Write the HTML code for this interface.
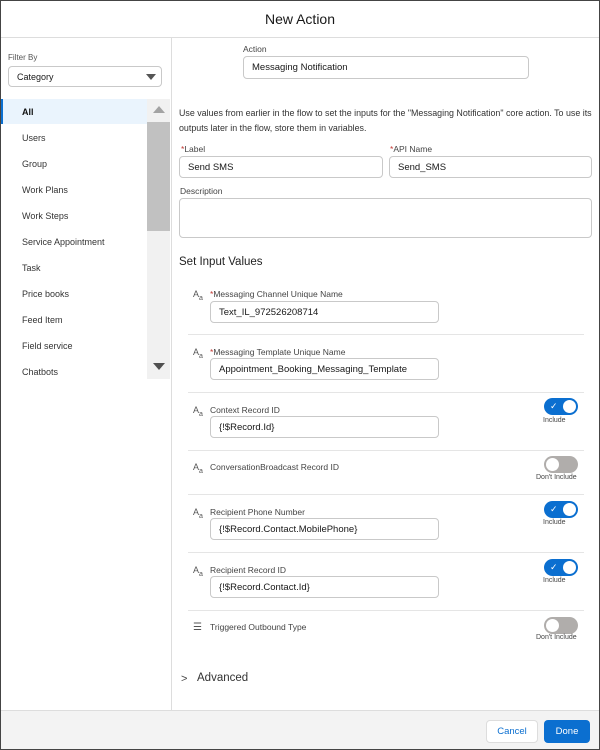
<!DOCTYPE html>
<html><head><style>
*{box-sizing:border-box;margin:0;padding:0}
body{width:600px;height:750px;font-family:"Liberation Sans",sans-serif;color:#181818;background:#fff;position:relative;overflow:hidden}
.a{position:absolute}
.frame{left:0;top:0;width:600px;height:750px;border:1px solid #444}
.inp{position:absolute;border:1px solid #c9c9c9;border-radius:4px;background:#fff;font-size:9.5px;padding-left:8px;display:flex;align-items:center;color:#181818}
.lbl{position:absolute;font-size:8.5px;color:#444}
.req{color:#c23934}
.sep{position:absolute;left:188px;width:396px;height:1px;background:#e5e5e5}
.ic{position:absolute;font-size:9px;color:#555}
.ic sub{font-size:7px}
.tg{position:absolute;left:544px;width:34px;height:17px;border-radius:9px}
.tg.on{background:#0b6fd0}
.tg.off{background:#b0adab}
.tg .k{position:absolute;top:2px;width:13px;height:13px;border-radius:50%;background:#fff}
.tg.on .k{right:2px}.tg.off .k{left:2px}
.tg .c{position:absolute;left:6px;top:3px;color:#fff;font-size:9px;line-height:11px}
.tl{position:absolute;font-size:7px;color:#444}
.li{position:absolute;left:22px;font-size:9px;color:#333}
</style></head><body>
<div class="a" style="left:0;top:0;width:600px;height:38px;border-bottom:1px solid #ddd"></div>
<div class="a" style="left:0;top:11px;width:600px;text-align:center;font-size:14px">New Action</div>
<div class="a" style="left:171px;top:38px;width:1px;height:672px;background:#ddd"></div>
<div class="a" style="left:8px;top:53px;font-size:8px;color:#555">Filter By</div>
<div class="inp" style="left:8px;top:66px;width:154px;height:21px;font-size:9px">Category</div>
<div class="a" style="left:146px;top:74px;border-left:5px solid transparent;border-right:5px solid transparent;border-top:6px solid #555"></div>
<div class="a" style="left:1px;top:99px;width:146px;height:25px;background:#eaf4fd;border-left:2px solid #0b6fd0"></div>
<div class="a" style="left:147px;top:99px;width:23px;height:280px;background:#f1f1f1"></div>
<div class="a" style="left:147px;top:122px;width:23px;height:109px;background:#c1c1c1"></div>
<div class="a" style="left:153px;top:106px;border-left:6px solid transparent;border-right:6px solid transparent;border-bottom:7px solid #a3a3a3"></div>
<div class="a" style="left:153px;top:363px;border-left:6px solid transparent;border-right:6px solid transparent;border-top:7px solid #505050"></div>
<div class="li" style="top:107px;font-weight:bold;color:#111">All</div>
<div class="li" style="top:133px">Users</div>
<div class="li" style="top:159px">Group</div>
<div class="li" style="top:185px">Work Plans</div>
<div class="li" style="top:211px">Work Steps</div>
<div class="li" style="top:237px">Service Appointment</div>
<div class="li" style="top:263px">Task</div>
<div class="li" style="top:289px">Price books</div>
<div class="li" style="top:315px">Feed Item</div>
<div class="li" style="top:341px">Field service</div>
<div class="li" style="top:367px">Chatbots</div>

<div class="lbl" style="left:243px;top:44px">Action</div>
<div class="inp" style="left:243px;top:56px;width:286px;height:23px">Messaging Notification</div>
<div class="a" style="left:179px;top:106px;width:414px;font-size:8.9px;line-height:15px;color:#333">Use values from earlier in the flow to set the inputs for the "Messaging Notification" core action. To use its outputs later in the flow, store them in variables.</div>
<div class="lbl" style="left:181px;top:144px"><span class="req">*</span>Label</div>
<div class="inp" style="left:179px;top:156px;width:204px;height:22px">Send SMS</div>
<div class="lbl" style="left:390px;top:144px"><span class="req">*</span>API Name</div>
<div class="inp" style="left:389px;top:156px;width:203px;height:22px">Send_SMS</div>
<div class="lbl" style="left:180px;top:186px">Description</div>
<div class="inp" style="left:179px;top:198px;width:413px;height:40px"></div>
<div class="a" style="left:179px;top:256px;font-size:11.5px;color:#222">Set Input Values</div>

<div class="ic" style="left:193px;top:289px">A<sub>a</sub></div>
<div class="lbl" style="left:210px;top:289px"><span class="req">*</span>Messaging Channel Unique Name</div>
<div class="inp" style="left:210px;top:301px;width:229px;height:22px">Text_IL_972526208714</div>
<div class="sep" style="top:334px"></div>
<div class="ic" style="left:193px;top:347px">A<sub>a</sub></div>
<div class="lbl" style="left:210px;top:347px"><span class="req">*</span>Messaging Template Unique Name</div>
<div class="inp" style="left:210px;top:358px;width:229px;height:22px">Appointment_Booking_Messaging_Template</div>
<div class="sep" style="top:392px"></div>
<div class="ic" style="left:193px;top:405px">A<sub>a</sub></div>
<div class="lbl" style="left:210px;top:405px">Context Record ID</div>
<div class="inp" style="left:210px;top:416px;width:229px;height:22px">{!$Record.Id}</div>
<div class="tg on" style="top:398px"><div class="k"></div><span class="c">✓</span></div>
<div class="tl" style="left:543px;top:417px">Include</div>
<div class="sep" style="top:450px"></div>
<div class="ic" style="left:193px;top:462px">A<sub>a</sub></div>
<div class="lbl" style="left:210px;top:462px">ConversationBroadcast Record ID</div>
<div class="tg off" style="top:456px"><div class="k"></div></div>
<div class="tl" style="left:536px;top:474px">Don't Include</div>
<div class="sep" style="top:494px"></div>
<div class="ic" style="left:193px;top:507px">A<sub>a</sub></div>
<div class="lbl" style="left:210px;top:507px">Recipient Phone Number</div>
<div class="inp" style="left:210px;top:518px;width:229px;height:22px">{!$Record.Contact.MobilePhone}</div>
<div class="tg on" style="top:501px"><div class="k"></div><span class="c">✓</span></div>
<div class="tl" style="left:543px;top:519px">Include</div>
<div class="sep" style="top:552px"></div>
<div class="ic" style="left:193px;top:565px">A<sub>a</sub></div>
<div class="lbl" style="left:210px;top:565px">Recipient Record ID</div>
<div class="inp" style="left:210px;top:576px;width:229px;height:22px">{!$Record.Contact.Id}</div>
<div class="tg on" style="top:559px"><div class="k"></div><span class="c">✓</span></div>
<div class="tl" style="left:543px;top:577px">Include</div>
<div class="sep" style="top:610px"></div>
<div class="ic" style="left:193px;top:622px;font-size:10px">☰</div>
<div class="lbl" style="left:210px;top:622px">Triggered Outbound Type</div>
<div class="tg off" style="top:617px"><div class="k"></div></div>
<div class="tl" style="left:536px;top:634px">Don't Include</div>
<div class="a" style="left:181px;top:673px;font-size:11px;color:#444">&gt;</div>
<div class="a" style="left:197px;top:672px;font-size:11.5px;color:#333">Advanced</div>

<div class="a" style="left:0;top:710px;width:600px;height:40px;background:#f3f3f3;border-top:1px solid #ddd"></div>
<div class="a" style="left:486px;top:720px;width:52px;height:23px;background:#fff;border:1px solid #ddd;border-radius:4px;color:#0b6fd0;font-size:9.5px;text-align:center;line-height:21px">Cancel</div>
<div class="a" style="left:544px;top:720px;width:46px;height:23px;background:#0b6fd0;border-radius:4px;color:#fff;font-size:9.5px;text-align:center;line-height:23px">Done</div>
<div class="a frame"></div>
</body></html>
